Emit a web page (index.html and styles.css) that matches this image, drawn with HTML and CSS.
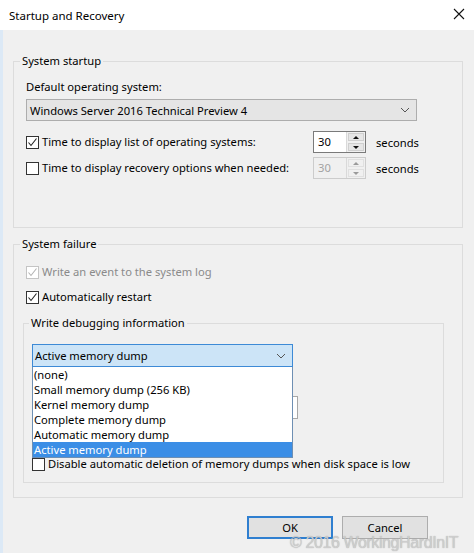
FILE: index.html
```html
<!DOCTYPE html>
<html lang="en">
<head>
    <meta charset="UTF-8">
    <meta name="viewport" content="width=device-width, initial-scale=1.0">
    <title>Startup and Recovery</title>
    <link rel="stylesheet" href="styles.css">
</head>
<body>
    <div class="titlebar">
        <span class="title">Startup and Recovery</span>
        <svg class="close" width="12" height="12" viewBox="0 0 12 12">
            <path d="M1 1 L11 11 M11 1 L1 11" stroke="#111" stroke-width="1.1" fill="none"/>
        </svg>
    </div>

    <div class="dialog">
        <fieldset class="group startup">
            <legend>System startup</legend>
            <div class="field-label">Default operating system:</div>
            <div class="combo">
                <span>Windows Server 2016 Technical Preview 4</span>
                <svg class="chevron" width="10" height="6" viewBox="0 0 10 6"><path d="M1 1 L5 5 L9 1" stroke="#555" fill="none"/></svg>
            </div>

            <div class="timer-row first">
                <label class="check">
                    <span class="box"><svg width="11" height="11" viewBox="0 0 11 11"><path d="M1.5 5.5 L4 8.5 L9.5 1.5" stroke="#222" stroke-width="1.1" fill="none"/></svg></span>
                    Time to display list of operating systems:
                </label>
                <div class="spin">
                    <span class="spin-value">30</span>
                    <span class="spin-buttons">
                        <span class="spin-up"></span>
                        <span class="spin-down"></span>
                    </span>
                </div>
                <span class="unit">seconds</span>
            </div>

            <div class="timer-row">
                <label class="check">
                    <span class="box"></span>
                    Time to display recovery options when needed:
                </label>
                <div class="spin disabled">
                    <span class="spin-value">30</span>
                    <span class="spin-buttons">
                        <span class="spin-up"></span>
                        <span class="spin-down"></span>
                    </span>
                </div>
                <span class="unit">seconds</span>
            </div>
        </fieldset>

        <fieldset class="group failure">
            <legend>System failure</legend>
            <label class="check disabled">
                <span class="box"><svg width="11" height="11" viewBox="0 0 11 11"><path d="M1.5 5.5 L4 8.5 L9.5 1.5" stroke="#b4b4b4" stroke-width="1.1" fill="none"/></svg></span>
                Write an event to the system log
            </label>
            <label class="check restart">
                <span class="box"><svg width="11" height="11" viewBox="0 0 11 11"><path d="M1.5 5.5 L4 8.5 L9.5 1.5" stroke="#222" stroke-width="1.1" fill="none"/></svg></span>
                Automatically restart
            </label>

            <fieldset class="group debug">
                <legend>Write debugging information</legend>
                <div class="combo-wrap">
                    <div class="combo open">
                        <span>Active memory dump</span>
                        <svg class="chevron" width="10" height="6" viewBox="0 0 10 6"><path d="M1 1 L5 5 L9 1" stroke="#555" fill="none"/></svg>
                    </div>
                    <ul class="dropdown">
                        <li>(none)</li>
                        <li>Small memory dump (256 KB)</li>
                        <li>Kernel memory dump</li>
                        <li>Complete memory dump</li>
                        <li>Automatic memory dump</li>
                        <li class="selected">Active memory dump</li>
                    </ul>
                </div>
                <!-- dump file path box, mostly under the open list -->
                <div class="textbox"></div>
                <label class="check low-space">
                    <span class="box"></span>
                    Disable automatic deletion of memory dumps when disk space is low
                </label>
            </fieldset>
        </fieldset>

        <div class="buttons">
            <button class="btn default">OK</button>
            <button class="btn">Cancel</button>
        </div>

        <div class="watermark">© 2016 WorkingHardInIT</div>
    </div>
</body>
</html>
```

FILE: styles.css
```css
body {
    margin: 0;
    background: #f0f0f0;
    font-family: "Noto Sans", sans-serif;
    font-size: 11.2px;
    color: #000;
}

.titlebar {
    height: 30px;
    background: #fff;
    display: flex;
    align-items: center;
    justify-content: space-between;
    padding: 0 9px 0 9px;
    font-size: 11.5px;
}

.close {
    margin-top: -2px;
}

.dialog {
    position: relative;
    height: 523px;
    box-sizing: border-box;
    border-left: 3px solid #dce9f6;
    padding: 23px 11px 0 10px;
    overflow: hidden;
}

/* group boxes */
.group {
    margin: 0;
    min-width: 0;
    border: 1px solid #dcdcdc;
}

.group legend {
    padding: 0 2px;
    line-height: 16px;
}

.startup {
    padding: 10px 12px 48px 12px;
}

.startup legend {
    margin-left: -6px;
}

.failure {
    margin-top: 8px;
    padding: 12px 18px 14px 9px;
}

.failure legend {
    margin-left: -3px;
}

.debug {
    margin-top: 10px;
    padding: 13px 8px 10px 8px;
}

.debug legend {
    margin-left: -3px;
}

.field-label {
    line-height: 16px;
}

/* combo boxes */
.combo {
    margin-top: 4px;
    width: 391px;
    height: 22px;
    box-sizing: border-box;
    border: 1px solid #adadad;
    background: #e5e5e5;
    display: flex;
    align-items: center;
    justify-content: space-between;
    padding: 0 6px 0 3px;
}

.combo-wrap {
    position: relative;
    width: 261px;
}

.combo.open {
    margin-top: 0;
    width: 261px;
    height: 23px;
    border-color: #3d8ad6;
    background: #cce4f7;
    padding-left: 2px;
}

.dropdown {
    position: absolute;
    top: 23px;
    left: 0;
    z-index: 2;
    width: 261px;
    box-sizing: border-box;
    margin: 0;
    padding: 0;
    list-style: none;
    background: #fff;
    border: 1px solid #6e8fb3;
    border-top: none;
}

.dropdown li {
    line-height: 15px;
    padding-left: 1px;
}

.dropdown li.selected {
    background: #3b8ee6;
    color: #fff;
}

/* checkboxes */
.check {
    display: flex;
    align-items: center;
    line-height: 16px;
    height: 16px;
}

.box {
    width: 13px;
    height: 13px;
    box-sizing: border-box;
    border: 1px solid #333;
    background: #fff;
    margin-right: 3px;
    display: flex;
    align-items: center;
    justify-content: center;
}

.check.disabled {
    color: #8a8a8a;
}

.check.disabled .box {
    border-color: #c4c4c4;
}

.failure > .check {
    margin-left: 3px;
}

.failure > .restart {
    margin-top: 9px;
}

/* timeout rows */
.timer-row {
    display: grid;
    grid-template-columns: 277px 53px auto;
    column-gap: 10px;
    align-items: center;
    height: 22px;
    margin-top: 4px;
}

.timer-row.first {
    margin-top: 10px;
}

.spin {
    display: flex;
    height: 22px;
    box-sizing: border-box;
    border: 1px solid #7a7a7a;
    background: #fff;
}

.spin-value {
    flex: 1;
    padding-left: 4px;
    line-height: 20px;
    border-right: 1px solid #d9d9d9;
}

.spin-buttons {
    width: 18px;
    display: flex;
    flex-direction: column;
    background: #f0f0f0;
}

.spin-up,
.spin-down {
    flex: 1;
    position: relative;
    margin: 1px;
    background: #e6e6e6;
    border: 1px solid #cfcfcf;
}

.spin-up::after,
.spin-down::after {
    content: "";
    position: absolute;
    left: 4px;
    top: 2px;
    border-left: 3px solid transparent;
    border-right: 3px solid transparent;
}

.spin-up::after {
    border-bottom: 3px solid #111;
}

.spin-down::after {
    border-top: 3px solid #111;
}

.spin.disabled {
    border-color: #cccccc;
    background: #f0f0f0;
    color: #a2a2a2;
}

.spin.disabled .spin-up,
.spin.disabled .spin-down {
    background: #f0f0f0;
    border-color: #e0e0e0;
}

.spin.disabled .spin-up::after {
    border-bottom-color: #9a9a9a;
}

.spin.disabled .spin-down::after {
    border-top-color: #9a9a9a;
}

/* dump file path */
.textbox {
    margin-top: 29px;
    width: 266px;
    height: 23px;
    box-sizing: border-box;
    border: 1px solid #a8a8a8;
    background: #fff;
}

.low-space {
    margin-top: 37px;
}

/* dialog buttons */
.buttons {
    display: flex;
    justify-content: flex-end;
    gap: 9px;
    margin-top: 18px;
    padding-right: 35px;
}

.btn {
    width: 86px;
    height: 23px;
    font: inherit;
    background: #e1e1e1;
    border: 1px solid #adadad;
    padding: 0;
}

.btn.default {
    border: 2px solid #2f7fd0;
}

.watermark {
    position: absolute;
    left: 287px;
    top: 505px;
    font-family: "Liberation Sans", Arial, sans-serif;
    font-size: 16px;
    line-height: 16px;
    letter-spacing: -0.4px;
    color: rgba(208, 208, 208, 0.92);
    text-shadow: 0 0 1px rgba(120, 120, 120, 0.6);
    white-space: nowrap;
}
```
